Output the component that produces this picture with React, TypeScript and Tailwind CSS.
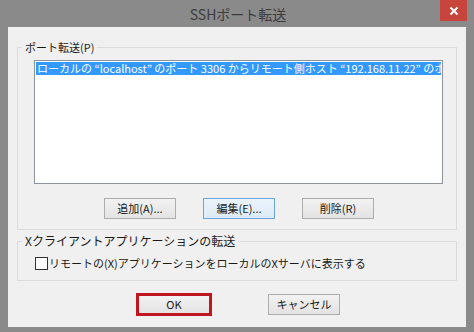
import React from "react";

const font = { fontFamily: '"Noto Sans CJK JP", "Noto Sans", sans-serif' };

function Btn({ children, className = "" }: { children: React.ReactNode; className?: string }) {
  return (
    <div
      className={`flex h-[21px] w-[72px] items-center justify-center border border-[#adadad] bg-gradient-to-b from-[#f2f2f2] to-[#e3e3e3] text-[11px] leading-none text-[#1a1a1a] ${className}`}
    >
      {children}
    </div>
  );
}

export default function App() {
  return (
    <div className="flex h-[332px] w-[474px] flex-col bg-[#8a8a8a]" style={font}>
      {/* title bar */}
      <div className="relative flex h-[27px] shrink-0 items-center justify-center">
        <span className="pl-[2px] text-[14px] leading-none text-[#3d3d3d]">SSHポート転送</span>
        <div className="absolute right-[7px] top-0 flex h-[21px] w-[27px] items-center justify-center bg-[#c8453e]">
          <svg width="10" height="10" viewBox="0 0 10 10">
            <path d="M1.5 1.5 L8.5 8.5 M8.5 1.5 L1.5 8.5" stroke="#ffffff" strokeWidth="2" />
          </svg>
        </div>
      </div>
      {/* client area */}
      <div className="mx-[8px] mb-[5px] flex min-w-0 flex-1 flex-col bg-[#f0f0f0] px-[9px] pt-[12px]">
        <fieldset className="flex min-w-0 flex-col border border-[#dcdcdc] pl-[16px] pr-[13px] pb-[10px]">
          <legend className="ml-[-12px] px-[3px] text-[11px] leading-[16px] text-[#1a1a1a]">ポート転送(P)</legend>
          <div className="mt-[5px] h-[124px] min-w-0 overflow-hidden border border-[#8f949c] bg-white p-[1px]">
            <div className="h-[13px] overflow-hidden whitespace-nowrap bg-[#3399ff] pl-[1px] text-[11px] leading-[13px] text-white">
              ローカルの “localhost” のポート 3306 からリモート側ホスト “192.168.11.22” のホスト
            </div>
          </div>
          <div className="mt-[14px] flex justify-center gap-[27px] pl-[1px]">
            <Btn>追加(A)...</Btn>
            <Btn className="!border-[#6aa6dc] !from-[#eaf3fb] !to-[#dcebf8]">編集(E)...</Btn>
            <Btn>削除(R)</Btn>
          </div>
        </fieldset>
        <fieldset className="mt-[3px] flex min-w-0 flex-col border border-[#dcdcdc] pl-[17px] pb-[9px]">
          <legend className="ml-[-13px] px-[3px] text-[12px] leading-[16px] text-[#1a1a1a]">Xクライアントアプリケーションの転送</legend>
          <div className="mt-[6px] flex h-[16px] items-center gap-[1px]">
            <div className="h-[13px] w-[13px] border border-[#333333] bg-white" />
            <span className="text-[11px] leading-none text-[#1a1a1a]">リモートの(X)アプリケーションをローカルのXサーバに表示する</span>
          </div>
        </fieldset>
        <div className="mt-[12px] flex items-center justify-center gap-[56px] pl-[2px]">
          <div className="border-[3px] border-[#c01622]">
            <div className="flex h-[17px] w-[70px] items-center justify-center bg-gradient-to-b from-[#f2f2f2] to-[#e3e3e3] text-[11px] leading-none text-[#1a1a1a]">
              OK
            </div>
          </div>
          <Btn>キャンセル</Btn>
        </div>
      </div>
    </div>
  );
}
